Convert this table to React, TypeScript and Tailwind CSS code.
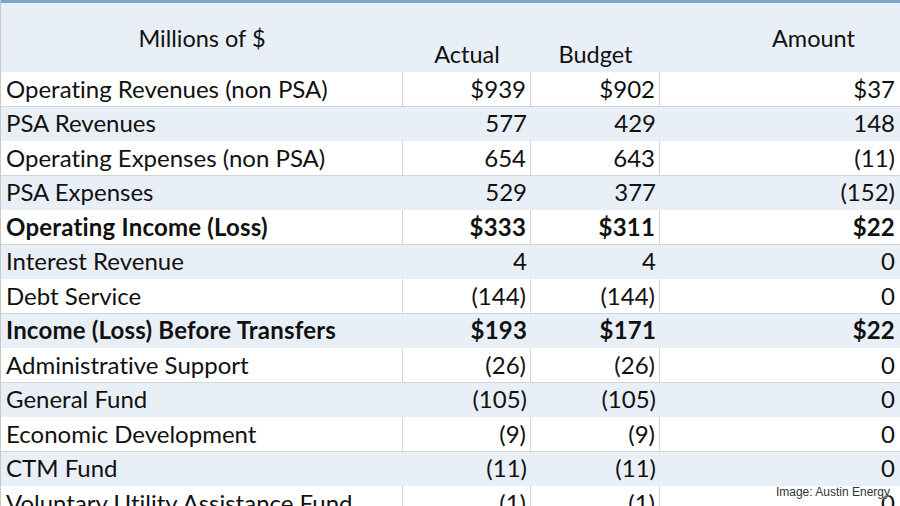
import React from 'react';

type Row = { label: string; actual: string; budget: string; amount: string; bold?: boolean };

const rows: Row[] = [
  { label: 'Operating Revenues (non PSA)', actual: '$939', budget: '$902', amount: '$37' },
  { label: 'PSA Revenues', actual: '577', budget: '429', amount: '148' },
  { label: 'Operating Expenses (non PSA)', actual: '654', budget: '643', amount: '(11)' },
  { label: 'PSA Expenses', actual: '529', budget: '377', amount: '(152)' },
  { label: 'Operating Income (Loss)', actual: '$333', budget: '$311', amount: '$22', bold: true },
  { label: 'Interest Revenue', actual: '4', budget: '4', amount: '0' },
  { label: 'Debt Service', actual: '(144)', budget: '(144)', amount: '0' },
  { label: 'Income (Loss) Before Transfers', actual: '$193', budget: '$171', amount: '$22', bold: true },
  { label: 'Administrative Support', actual: '(26)', budget: '(26)', amount: '0' },
  { label: 'General Fund', actual: '(105)', budget: '(105)', amount: '0' },
  { label: 'Economic Development', actual: '(9)', budget: '(9)', amount: '0' },
  { label: 'CTM Fund', actual: '(11)', budget: '(11)', amount: '0' },
  { label: 'Voluntary Utility Assistance Fund', actual: '(1)', budget: '(1)', amount: '0' },
];

const App: React.FC = () => {
  return (
    <div
      className="relative w-[900px] h-[506px] overflow-hidden bg-white text-[#111] border-l border-[#c8c8c8] [font-variant-ligatures:none]"
      style={{ fontFamily: 'Lato, "Open Sans", sans-serif' }}
    >
      {/* Header */}
      <div className="h-[72px] bg-[#e9eff7] border-t-[3px] border-[#7aa6cc] flex text-[23.5px] leading-none">
        <div className="w-[402px] flex justify-center pt-[24px]">Millions of $</div>
        <div className="w-[128px] flex justify-center items-end pb-[6px]">Actual</div>
        <div className="w-[129px] flex justify-center items-end pb-[6px]">Budget</div>
        <div className="flex-1 flex pl-[112px] pt-[24px]">Amount</div>
      </div>

      {/* Rows */}
      {rows.map((row, i) => {
        const white = i % 2 === 0;
        const cell = white ? 'border-r border-[#d4d4d4]' : '';
        return (
          <div
            key={row.label}
            className={`h-[34.5px] flex items-center text-[24px] leading-none border-b ${
              white ? 'bg-white border-[#d4d4d4]' : 'bg-[#e9eff7] border-[#e9eff7]'
            } ${row.bold ? 'font-bold tracking-[0.2px]' : ''}`}
          >
            <div className={`w-[402px] h-full flex items-center pl-[5px] ${cell}`}>{row.label}</div>
            <div className={`w-[128px] h-full flex items-center justify-end pr-[4px] ${cell}`}>{row.actual}</div>
            <div className={`w-[129px] h-full flex items-center justify-end pr-[4px] ${cell}`}>{row.budget}</div>
            <div className="flex-1 h-full flex items-center justify-end pr-[5px]">{row.amount}</div>
          </div>
        );
      })}

      {/* Credit */}
      <div
        className="absolute right-[10px] bottom-[5px] text-[12px] text-[#333]"
        style={{ fontFamily: '"Liberation Sans", Arial, sans-serif', textShadow: '0 0 2px #fff, 0 0 2px #fff' }}
      >
        Image: Austin Energy
      </div>
    </div>
  );
};

export default App;
